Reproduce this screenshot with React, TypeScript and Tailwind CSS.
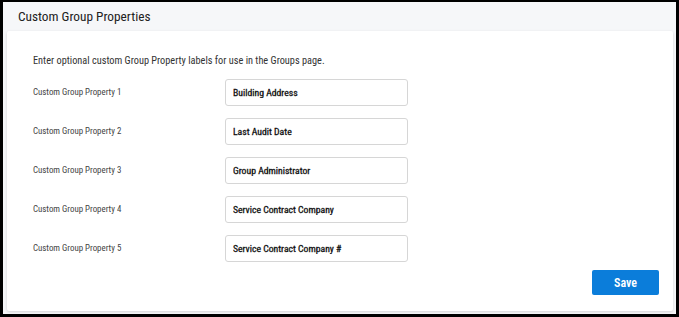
import React from 'react';

const properties = [
  'Building Address',
  'Last Audit Date',
  'Group Administrator',
  'Service Contract Company',
  'Service Contract Company #',
];

const font = { fontFamily: '"Roboto Condensed", "Liberation Sans Narrow", "DejaVu Sans Condensed", Roboto, sans-serif' };

const App: React.FC = () => {
  return (
    <div
      className="w-[679px] h-[317px] flex flex-col bg-[#f6f7f9] border-black border-l-[3px] border-r-[3px] border-t-2 border-b-[3px] text-[#222]"
      style={font}
    >
      <div className="h-[29px] shrink-0 flex items-center pl-[15px] text-[13.3px] text-[#222]">
        Custom Group Properties
      </div>
      <div className="flex-1 ml-[4px] mr-[3px] mb-[3px] bg-white rounded-[2px] shadow-[0_1px_3px_rgba(0,0,0,0.15)] flex flex-col pl-[26px] pr-[14px] pt-[23px]">
        <p className="text-[10.3px] leading-[14px] text-[#333]">
          Enter optional custom Group Property labels for use in the Groups page.
        </p>
        <div className="mt-[11px] flex flex-col gap-[12px]">
          {properties.map((value, index) => (
            <div key={index} className="flex items-center">
              <label className="w-[192px] text-[8.9px] text-[#444]">Custom Group Property {index + 1}</label>
              <input
                type="text"
                defaultValue={value}
                className="w-[183px] h-[27px] px-[7px] border border-[#d6d6d6] rounded-[3px] text-[9.7px] font-normal text-[#111] [-webkit-text-stroke:0.3px_#111] outline-none"
                style={font}
              />
            </div>
          ))}
        </div>
        <div className="flex justify-end mt-[8px]">
          <button className="w-[67px] h-[25px] bg-[#0b7dda] text-white text-[12px] font-semibold rounded-[2px]">
            Save
          </button>
        </div>
      </div>
    </div>
  );
};

export default App;
